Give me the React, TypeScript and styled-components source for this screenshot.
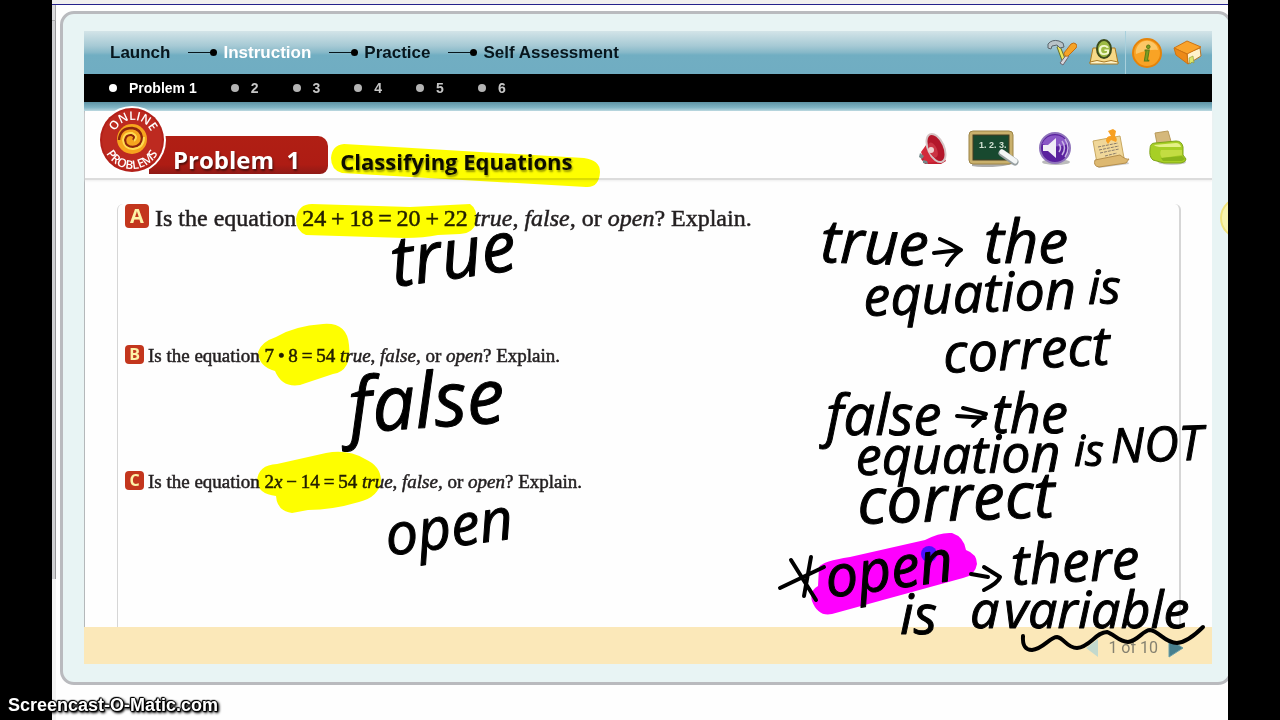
import React from "react";
import styled, { createGlobalStyle } from "styled-components";

const sans = `"Liberation Sans", Arial, sans-serif`;
const humanist = `"Open Sans", "Noto Sans", sans-serif`;
const serif = `"Liberation Serif", "Times New Roman", serif`;

const GlobalStyle = createGlobalStyle`
  *, *::before, *::after { box-sizing: border-box; }
  body { margin: 0; background: #000; }
  button { border: 0; padding: 0; background: none; cursor: pointer; display: block; }
  svg { display: block; }
`;

const Page = styled.div`
  position: relative;
  min-height: 100vh;
  padding: 0 52px;
  background: #000;
  display: flex;
  overflow: hidden;
`;

const Recording = styled.main`
  position: relative;
  flex: 1;
  min-width: 0;
  display: flex;
  flex-direction: column;
  overflow: hidden;
  background: #fefefe;
`;

const BrowserEdge = styled.div`
  height: 5px;
  background: #f0efee;
  border-bottom: 1px solid #25228c;
`;

const Row = styled.div`
  flex: 1;
  display: flex;
  align-items: stretch;
`;

const ScrollTrack = styled.div`
  width: 4px;
  display: flex;
  flex-direction: column;
  background: #f3f3f3;
`;

const ScrollButton = styled.div`
  height: 16px;
  background: #dadadc;
  border-right: 1px solid #a9a9ab;
  border-bottom: 1px solid #a9a9ab;
`;

const ScrollThumb = styled.div`
  flex: 0 0 78%;
  background: #cfcfd1;
  border-right: 1px solid #98989a;
`;

const Frame = styled.section`
  flex: 1;
  align-self: flex-start;
  margin: 6px -4px 32px 4px;
  padding: 17px 17px 18px 21px;
  border: 3px solid #b9babe;
  border-radius: 14px;
  background: #e8f4f4;
`;

const NavBar = styled.nav`
  height: 43px;
  padding: 0 3px 0 26px;
  display: flex;
  align-items: center;
  background: linear-gradient(#d3e4e8 0%, #a5c9d4 35%, #86b8c8 50%, #71aec2 56%, #70adc2 100%);
`;

const StepLink = styled.a<{ $active?: boolean }>`
  font: bold 17px/20px ${sans};
  color: ${(p) => (p.$active ? "#fff" : "#07161d")};
  text-decoration: none;
`;

const Connector = styled.span`
  width: 29px;
  height: 7px;
  margin: 0 6px 0 18px;
  display: flex;
  align-items: center;
  justify-content: flex-end;
  background: linear-gradient(#07161d, #07161d) center / 100% 1px no-repeat;
  &::after {
    content: "";
    width: 7px;
    height: 7px;
    border-radius: 50%;
    background: #000;
  }
`;

const NavTools = styled.div`
  margin-left: auto;
  align-self: stretch;
  display: flex;
  align-items: center;
`;

const NavTool = styled.button<{ $divided?: boolean }>`
  height: 100%;
  width: 42px;
  display: flex;
  align-items: center;
  justify-content: center;
  border-left: ${(p) => (p.$divided ? "1px solid #a8d0dc" : "0")};
`;

const ProblemBar = styled.nav`
  height: 28px;
  padding-left: 25px;
  display: flex;
  align-items: center;
  gap: 34px;
  background: #000;
`;

const ProblemLink = styled.a<{ $active?: boolean }>`
  display: flex;
  align-items: center;
  gap: 12px;
  font: bold 14px/16px ${sans};
  color: ${(p) => (p.$active ? "#fff" : "#c6c6c6")};
  text-decoration: none;
  &::before {
    content: "";
    width: 8px;
    height: 8px;
    border-radius: 50%;
    background: ${(p) => (p.$active ? "#fff" : "#b4b4b4")};
  }
`;

const TealRule = styled.div`
  height: 9px;
  background: linear-gradient(#5e93a4, #7fb4c4 60%, #b9d7df);
`;

const Slide = styled.article`
  border-left: 1px solid #b4b8ba;
  background: #fefefe;
`;

const SlideHeader = styled.header`
  height: 69px;
  padding: 0 25px 4px 14px;
  display: flex;
  align-items: flex-end;
  border-bottom: 2px solid #dcdcdc;
  box-shadow: 0 1px 2px #eee;
`;

const Logo = styled.svg`
  position: relative;
  flex: none;
  width: 68px;
  height: 68px;
`;

const RedTab = styled.div`
  height: 38px;
  margin-left: -18px;
  padding: 5px 28px 0 24px;
  border-radius: 0 10px 8px 0;
  background: linear-gradient(#b01f14, #ae1c14 75%, #8f1a16);
  color: #fff;
  font: bold 24px/38px ${humanist};
  white-space: pre;
  text-shadow: 1px 2px 2px #50100c;
`;

const SlideTitle = styled.h1`
  margin: 0 0 0 12px;
  font: bold 22px/26px ${humanist};
  color: #0c0c04;
  text-shadow: 1px 2px 2px #9a9a7a;
`;

const SlideTools = styled.div`
  height: 40px;
  margin: 0 0 6px auto;
  display: flex;
  align-items: center;
  gap: 19px;
`;

const SlideBody = styled.div`
  padding: 24px 31px 0 32px;
`;

const Questions = styled.ol`
  margin: 0;
  padding: 0 0 0 7px;
  list-style: none;
  border: solid #d6d6d6;
  border-width: 0 2px 0 1px;
  border-radius: 6px 6px 0 0;
`;

const Question = styled.li<{ $size: "large" | "small" }>`
  display: flex;
  align-items: flex-start;
  gap: ${(p) => (p.$size === "large" ? 6 : 4)}px;
  height: ${(p) => (p.$size === "large" ? 141 : 126)}px;
  font: ${(p) => (p.$size === "large" ? "24px/28px" : "19px/22px")} ${serif};
  color: #231f20;
  -webkit-text-stroke: 0.5px #231f20;
  &:last-child { height: 156px; }
`;

const Badge = styled.span<{ $size: "large" | "small" }>`
  width: ${(p) => (p.$size === "large" ? 24 : 19)}px;
  height: ${(p) => (p.$size === "large" ? 24 : 19)}px;
  border-radius: 4px;
  background: #c3361d;
  color: #fdf3a8;
  text-align: center;
  font: bold ${(p) => (p.$size === "large" ? "20px/24px" : "16px/19px")} ${humanist};
  -webkit-text-stroke: 0;
`;

const SlideFooter = styled.footer`
  height: 37px;
  padding: 4px 28px 0 0;
  display: flex;
  align-items: center;
  justify-content: flex-end;
  gap: 10px;
  background: #fbe8b9;
  color: #858170;
  font: 16px/20px Roboto, ${sans};
`;

const Halo = styled.div`
  position: absolute;
  top: 197px;
  right: -34px;
  width: 42px;
  height: 42px;
  border-radius: 50%;
  border: 2px solid #efe27c;
  background: #f7f4b0;
`;

const Markup = styled.svg<{ $multiply?: boolean }>`
  position: absolute;
  top: 0;
  left: 0;
  width: 100%;
  height: 100%;
  pointer-events: none;
  mix-blend-mode: ${(p) => (p.$multiply ? "multiply" : "normal")};
`;

const InkText = styled.text`
  font-family: ${humanist};
  font-style: italic;
  fill: #000;
  stroke: #000;
  stroke-width: 1px;
  stroke-linejoin: round;
`;

const Watermark = styled.div`
  position: absolute;
  left: 8px;
  bottom: 4px;
  color: #fff;
  font: bold 18px/22px ${sans};
  text-shadow: 1px 0 1px #000, -1px 0 1px #000, 0 1px 1px #000, 0 -1px 1px #000, 1px 1px 1px #000, -1px -1px 1px #000, 1px 2px 3px #000, 2px 1px 3px #000;
`;

const steps = ["Launch", "Instruction", "Practice", "Self Assessment"];

type Word = { text: string; x: number; y: number; size: number; tilt?: number };

const words: Word[] = [
  { text: "true", x: 394, y: 287, size: 70, tilt: -8 },
  { text: "false", x: 350, y: 433, size: 76, tilt: -4 },
  { text: "open", x: 388, y: 556, size: 58, tilt: -8 },
  { text: "true", x: 820, y: 262, size: 60, tilt: 2 },
  { text: "the", x: 984, y: 263, size: 60 },
  { text: "equation", x: 864, y: 316, size: 54, tilt: -2 },
  { text: "is", x: 1088, y: 304, size: 48 },
  { text: "correct", x: 944, y: 373, size: 54, tilt: -3 },
  { text: "false", x: 826, y: 435, size: 56 },
  { text: "the", x: 992, y: 433, size: 54 },
  { text: "equation", x: 856, y: 475, size: 52, tilt: -1 },
  { text: "is", x: 1074, y: 466, size: 44 },
  { text: "NOT", x: 1111, y: 463, size: 48, tilt: -2 },
  { text: "correct", x: 858, y: 524, size: 64, tilt: -2 },
  { text: "open", x: 828, y: 598, size: 58, tilt: -8 },
  { text: "there", x: 1012, y: 585, size: 56, tilt: -3 },
  { text: "is", x: 900, y: 634, size: 54 },
  { text: "a", x: 970, y: 628, size: 52 },
  { text: "variable", x: 1004, y: 628, size: 52 },
];

const ToolsIcon = () => (
  <svg width="30" height="27" viewBox="0 0 30 27">
    <path d="M10 8l6 16 3-2-6-15z" fill="#eee65a" stroke="#67702b" />
    <path d="M1 5q4-5 11-3l4 2 1 4-4 1-3-3-5 1-1 3-3-1z" fill="#b9c3c8" stroke="#59646b" />
    <path d="M13 24l7-9 2 2-6 9z" fill="#d8d6dc" stroke="#6e6872" />
    <path d="M17 14l7-9q3-2 5 0t0 4l-8 8q-4 1-4-3z" fill="#f6a326" stroke="#c26d12" />
  </svg>
);

const GlossaryIcon = () => (
  <svg width="30" height="27" viewBox="0 0 30 27">
    <path d="M4 9h22l3 15H1z" fill="#f6d987" stroke="#a97a25" />
    <path d="M1 23q7-3 14 0 7-3 14 0v2H1z" fill="#fff3c8" stroke="#a97a25" />
    <ellipse cx="15" cy="10" rx="7" ry="9" fill="#9dbb45" stroke="#3c4b1b" strokeWidth="2" />
    <text x="15" y="16" textAnchor="middle" fontFamily="Liberation Sans, sans-serif" fontWeight="bold" fontSize="15" fill="#f3f9cf">G</text>
  </svg>
);

const InfoIcon = () => (
  <svg width="32" height="32" viewBox="0 0 32 32">
    <circle cx="16" cy="16" r="14" fill="#f9a325" stroke="#e58309" strokeWidth="2" />
    <path d="M5 17A11 11 0 0 1 27 13Q19 12 5 17z" fill="#fcc766" />
    <text x="16" y="24" textAnchor="middle" fontFamily="Liberation Serif, serif" fontStyle="italic" fontWeight="bold" fontSize="23" fill="#7c9f22" stroke="#5c7c18">i</text>
  </svg>
);

const BookIcon = () => (
  <svg width="30" height="26" viewBox="0 0 30 26">
    <path d="M14 13l13-5 1 8-13 8z" fill="#fff2cc" stroke="#ba7524" />
    <path d="M1 8L14 1l14 6-14 7z" fill="#f9a42c" stroke="#cf7413" />
    <path d="M1 8l13 6 1 10L3 15z" fill="#ed8a18" stroke="#cf7413" />
    <path d="M16 18l1 6 2-2 2 1-1-7z" fill="#dfe76b" stroke="#8c9430" strokeWidth=".6" />
  </svg>
);

const MegaphoneIcon = () => (
  <svg width="31" height="33" viewBox="0 0 31 33">
    <path d="M3 27l9-24 16 26-5 3H7z" fill="#c11f30" />
    <path d="M3 20l8-11 7 21-11 1z" fill="#d32a3b" />
    <ellipse cx="18" cy="16" rx="8" ry="15" transform="rotate(-24 18 16)" fill="#b3162a" stroke="#d5c4c5" strokeWidth="2" />
    <ellipse cx="15" cy="18" rx="4" ry="8" transform="rotate(-24 15 18)" fill="#cb3444" />
    <circle cx="13" cy="18" r="3" fill="#efd2d0" />
    <path d="M2 21l4 3-2 3-3-2zM5 28l4 1 1 3-5-1z" fill="#73888a" />
  </svg>
);

const BoardIcon = () => (
  <svg width="51" height="37" viewBox="0 0 51 37">
    <path d="M4 34h37l4-3v3q-20 5-41 2z" fill="#777" opacity=".6" />
    <rect x="1" y="1" width="44" height="33" rx="4" fill="#c9b06c" stroke="#9d8446" />
    <rect x="5" y="5" width="36" height="25" fill="#18492f" stroke="#463d20" />
    <text x="11" y="18" fontFamily="Liberation Sans, sans-serif" fontSize="9" fontWeight="bold" fill="#d3e2d4">1. 2. 3.</text>
    <path d="M34 23l13 9" stroke="#98a0a2" strokeWidth="7" strokeLinecap="round" />
    <path d="M34 22l13 9" stroke="#f3f6f6" strokeWidth="5" strokeLinecap="round" />
  </svg>
);

const AudioIcon = () => (
  <svg width="34" height="35" viewBox="0 0 34 35">
    <ellipse cx="18" cy="31" rx="14" ry="3" fill="#bbb" />
    <circle cx="17" cy="17" r="15" fill="#5a219e" stroke="#8f74bb" strokeWidth="2" />
    <path d="M4 13A14 14 0 0 1 30 13Q17 18 4 13z" fill="#8a58c6" />
    <path d="M5 14h5l8-7v20l-8-7H5z" fill="#f0edf6" />
    <path d="M21 13q3 4 0 8M24 10q5 7 0 14M27 8q6 9 0 18" fill="none" stroke="#c8b4e4" strokeWidth="1.5" />
  </svg>
);

const NoteIcon = () => (
  <svg width="39" height="40" viewBox="0 0 39 40">
    <path d="M5 38l32-4 1 2-30 4z" fill="#ccc" />
    <path d="M2 13l27-5 4 22-27 5z" fill="#f0d799" stroke="#c9a962" />
    <path d="M4 32l25-5q6 5 9 4l-3 4-27 4q-6-1-4-7z" fill="#ddb870" stroke="#b68f4c" />
    <path d="M7 19l20-4M8 22l20-4M9 25l19-4M14 28l12-3" stroke="#8a7c6a" strokeDasharray="3 1" />
    <path d="M15 13q0-5 5-5l-3-5 5-2 3 2-1 5q3 3 1 6l-5-2-3 4z" fill="#f7a022" />
  </svg>
);

const PrinterIcon = () => (
  <svg width="38" height="36" viewBox="0 0 38 36">
    <ellipse cx="23" cy="32" rx="14" ry="3" fill="#ccc" />
    <path d="M6 3l13-2 4 14-14 4z" fill="#d5b87b" stroke="#b99b5b" />
    <path d="M1 19q0-6 5-6l21-2q6 0 7 6v8l3 4q0 3-5 4H15L4 30q-4-3-3-11z" fill="#a7cf25" stroke="#7ea419" />
    <path d="M5 15l22-2q4 0 5 4H13q-6 0-8-2z" fill="#e4f187" />
    <path d="M12 20h21v5l-20 3q-3-4-1-8z" fill="#c3dd42" />
    <path d="M12 28l21-2 3 3-3 2H14z" fill="#8ab41a" />
  </svg>
);

const SpiralLogo = () => (
  <Logo viewBox="0 0 68 68" role="img" aria-label="Online Problems">
    <defs>
      <path id="arc-top" d="M14 34A20 20 0 0 1 54 34" />
      <path id="arc-bottom" d="M4 34A29 29 0 0 0 62 34" />
    </defs>
    <circle cx="33" cy="34" r="34" fill="#fff" />
    <circle cx="33" cy="34" r="32" fill="#b32019" />
    <circle cx="33" cy="34" r="30" fill="#bd2a20" />
    <circle cx="33" cy="33" r="15" fill="#f6a51e" />
    <path d="M34 34q3-3-1-5-6-1-7 5 0 7 8 7 9-1 9-9-1-9-10-10-12 0-13 12" fill="none" stroke="#8d260c" strokeWidth="2.5" />
    <path d="M35 35q5-5-2-8-8-1-9 7 1 9 10 9 11-1 11-12" fill="none" stroke="#ffdc52" strokeWidth="2" />
    <text fontFamily="Open Sans, sans-serif" fontWeight="600" fontSize="12" fill="#fff" textAnchor="middle">
      <textPath href="#arc-top" startOffset="50%">ONLINE</textPath>
    </text>
    <text fontFamily="Open Sans, sans-serif" fontWeight="600" fontSize="12" fill="#fff" textAnchor="middle">
      <textPath href="#arc-bottom" startOffset="50%">PROBLEMS</textPath>
    </text>
  </Logo>
);

const Ask = ({ label, size, children }: { label: string; size: "large" | "small"; children: React.ReactNode }) => (
  <Question $size={size}>
    <Badge $size={size}>{label}</Badge>
    <span>
      Is the equation {children} <i>true</i>, <i>false</i>, or <i>open</i>? Explain.
    </span>
  </Question>
);

export default function App() {
  return (
    <Page>
      <GlobalStyle />
      <Recording>
        <BrowserEdge />
        <Row>
          <ScrollTrack>
            <ScrollButton />
            <ScrollThumb />
          </ScrollTrack>
          <Frame>
            <NavBar>
              {steps.map((step, i) => (
                <React.Fragment key={step}>
                  {i > 0 && <Connector />}
                  <StepLink href="#" $active={i === 1}>{step}</StepLink>
                </React.Fragment>
              ))}
              <NavTools>
                <NavTool aria-label="Tools"><ToolsIcon /></NavTool>
                <NavTool aria-label="Glossary"><GlossaryIcon /></NavTool>
                <NavTool aria-label="Information" $divided><InfoIcon /></NavTool>
                <NavTool aria-label="Book"><BookIcon /></NavTool>
              </NavTools>
            </NavBar>
            <ProblemBar>
              <ProblemLink href="#" $active>Problem 1</ProblemLink>
              {[2, 3, 4, 5, 6].map((n) => (
                <ProblemLink href="#" key={n}>{n}</ProblemLink>
              ))}
            </ProblemBar>
            <TealRule />
            <Slide>
              <SlideHeader>
                <SpiralLogo />
                <RedTab>{"Problem  1"}</RedTab>
                <SlideTitle>Classifying Equations</SlideTitle>
                <SlideTools>
                  <button aria-label="Announce"><MegaphoneIcon /></button>
                  <button aria-label="Board"><BoardIcon /></button>
                  <button aria-label="Audio"><AudioIcon /></button>
                  <button aria-label="Notes"><NoteIcon /></button>
                  <button aria-label="Print"><PrinterIcon /></button>
                </SlideTools>
              </SlideHeader>
              <SlideBody>
                <Questions>
                  <Ask label="A" size="large">{"24\u2009+\u200918\u2009=\u200920\u2009+\u200922"}</Ask>
                  <Ask label="B" size="small">{"7\u2009•\u20098\u2009=\u200954"}</Ask>
                  <Ask label="C" size="small">2<i>x</i>{"\u2009−\u200914\u2009=\u200954"}</Ask>
                </Questions>
              </SlideBody>
            </Slide>
            <SlideFooter>
              <button aria-label="Previous">
                <svg width="12" height="18" viewBox="0 0 12 18"><path d="M12 0v18L0 9z" fill="#c3d9cd" /></svg>
              </button>
              <span>1 of 10</span>
              <button aria-label="Next">
                <svg width="16" height="20" viewBox="0 0 16 20"><path d="M1 1v18l14-9z" fill="#477f8e" stroke="#6ba0a8" /></svg>
              </button>
            </SlideFooter>
          </Frame>
        </Row>
        <Halo />
      </Recording>

      <Markup $multiply aria-hidden="true">
        <g fill="#ffff00">
          <path d="M344 144L584 158Q600 160 600 172Q599 188 586 187L342 173Q331 170 331 158Q332 145 344 144z" />
          <path d="M312 204L410 207L470 204Q478 209 476 222Q474 233 460 234L438 235Q424 238 405 238L306 235Q296 231 296 219Q298 204 312 204z" />
          <path d="M258 352Q261 342 276 337Q294 326 323 324Q347 322 349 345Q352 371 333 374L300 385Q282 388 275 371Q259 367 258 352z" />
          <path d="M257 481Q258 465 277 464L326 453Q348 449 365 459Q381 466 381 481Q379 497 359 502Q332 510 308 510L292 513Q277 511 276 496Q258 494 257 481z" />
        </g>
        <path fill="#ff00ff" d="M819 567Q823 561 850 557L925 540Q940 532 952 533Q964 537 966 550Q977 554 977 564Q975 576 963 578L832 614Q818 617 812 601Q809 591 818 586z" />
      </Markup>

      <Markup>
        <circle cx="929" cy="554" r="8" fill="#4a10ff" />
        {words.map(({ text, x, y, size, tilt = 0 }) => (
          <InkText key={`${x}-${y}`} x={x} y={y} fontSize={size} transform={`rotate(${tilt} ${x} ${y})`}>
            {text}
          </InkText>
        ))}
        <g fill="none" stroke="#000" strokeWidth="4" strokeLinecap="round" strokeLinejoin="round">
          <path d="M934 253L960 250M940 239Q950 243 961 250Q954 254 947 265" />
          <path d="M957 416L985 418M963 408L986 414L973 426" />
          <path d="M971 574L988 577M984 567L1000 577Q998 583 984 590" />
          <path d="M780 588L824 567M791 560L816 600M811 557L804 596" />
          <path d="M1023 636Q1022 650 1032 650C1043 649 1050 637 1057 637C1064 638 1067 648 1077 648C1090 647 1096 632 1107 632C1114 634 1119 642 1128 642C1138 641 1143 630 1150 630C1159 631 1165 643 1177 643Q1188 642 1203 627" />
        </g>
      </Markup>
      <Watermark>Screencast-O-Matic.com</Watermark>
    </Page>
  );
}
